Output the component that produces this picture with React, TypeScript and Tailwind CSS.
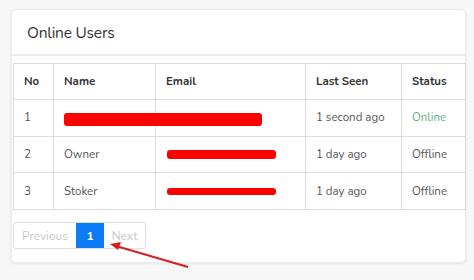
import React from "react";

type Row = {
  no: number;
  name: string;
  seen: string;
  status: "Online" | "Offline";
};

const rows: Row[] = [
  { no: 1, name: "", seen: "1 second ago", status: "Online" },
  { no: 2, name: "Owner", seen: "1 day ago", status: "Offline" },
  { no: 3, name: "Stoker", seen: "1 day ago", status: "Offline" },
];

// red marker scribbles hiding names / emails
function Redact({ w, h, className = "" }: { w: number; h: number; className?: string }) {
  return (
    <span
      className={`block rounded-[3px] bg-[#f00] ${className}`}
      style={{ width: w, height: h }}
    />
  );
}

export default function App() {
  return (
    <div className="relative h-[280px] w-[474px] bg-[#f7f7f7] pl-[11px] pt-[9px] font-['Nunito','Lato','Noto_Sans',sans-serif]">
      <div className="w-[455px] rounded-[5px] border border-[#ececec] bg-white pb-[13px] shadow-[0_1px_3px_rgba(0,0,0,0.08)]">
        <div className="h-[46px] border-b-2 border-[#ebebeb] pl-[15px] pt-[13px] text-[15.5px] leading-[20px] tracking-[-0.2px] text-[#333]">
          Online Users
        </div>
        <div className="px-[1px] pt-[7px]">
          <table className="w-[452px] table-fixed border-collapse text-[11.5px] text-[#555]">
            <colgroup>
              <col className="w-[40px]" />
              <col className="w-[102px]" />
              <col className="w-[150px]" />
              <col className="w-[96px]" />
              <col className="w-[64px]" />
            </colgroup>
            <thead>
              <tr className="h-[36px] text-left font-semibold text-[#333]">
                {["No", "Name", "Email", "Last Seen", "Status"].map((h) => (
                  <th key={h} className="border border-[#dcdcdc] pl-[10px]">
                    {h}
                  </th>
                ))}
              </tr>
            </thead>
            <tbody>
              {rows.map((r) => (
                <tr key={r.no} className="h-[36.7px]">
                  <td className="border border-[#dcdcdc] pl-[10px]">{r.no}</td>
                  <td className="relative border border-[#dcdcdc] pl-[10px]">
                    {r.name}
                    {r.no === 1 && (
                      <span className="absolute left-[10px] top-[13px] z-10">
                        <Redact w={198} h={13} />
                      </span>
                    )}
                  </td>
                  <td className="border border-[#dcdcdc] pl-[11px]">
                    {r.no !== 1 && <Redact w={109} h={r.no === 2 ? 9 : 7} />}
                  </td>
                  <td className="border border-[#dcdcdc] pl-[10px]">{r.seen}</td>
                  <td
                    className={`border border-[#dcdcdc] pl-[10px] ${
                      r.status === "Online" ? "text-[#5fb37f]" : ""
                    }`}
                  >
                    {r.status}
                  </td>
                </tr>
              ))}
            </tbody>
          </table>
          <div className="mt-[12px] flex h-[27px] w-[133px] overflow-hidden rounded-[3px] border border-[#dedede] text-[12px]">
            <span className="flex w-[62px] items-center justify-center text-[#c8c8c8]">
              Previous
            </span>
            <span className="flex w-[28px] items-center justify-center bg-[#0d7bf5] font-bold text-white">
              1
            </span>
            <span className="flex flex-1 items-center justify-center text-[#c8c8c8]">
              Next
            </span>
          </div>
        </div>
      </div>
      <svg
        className="absolute left-0 top-0"
        width="474"
        height="280"
        viewBox="0 0 474 280"
      >
        <line x1="188" y1="267" x2="116" y2="246" stroke="#d42020" strokeWidth="2" />
        <polygon points="110,244 121,242 118,250" fill="#d42020" />
      </svg>
    </div>
  );
}
